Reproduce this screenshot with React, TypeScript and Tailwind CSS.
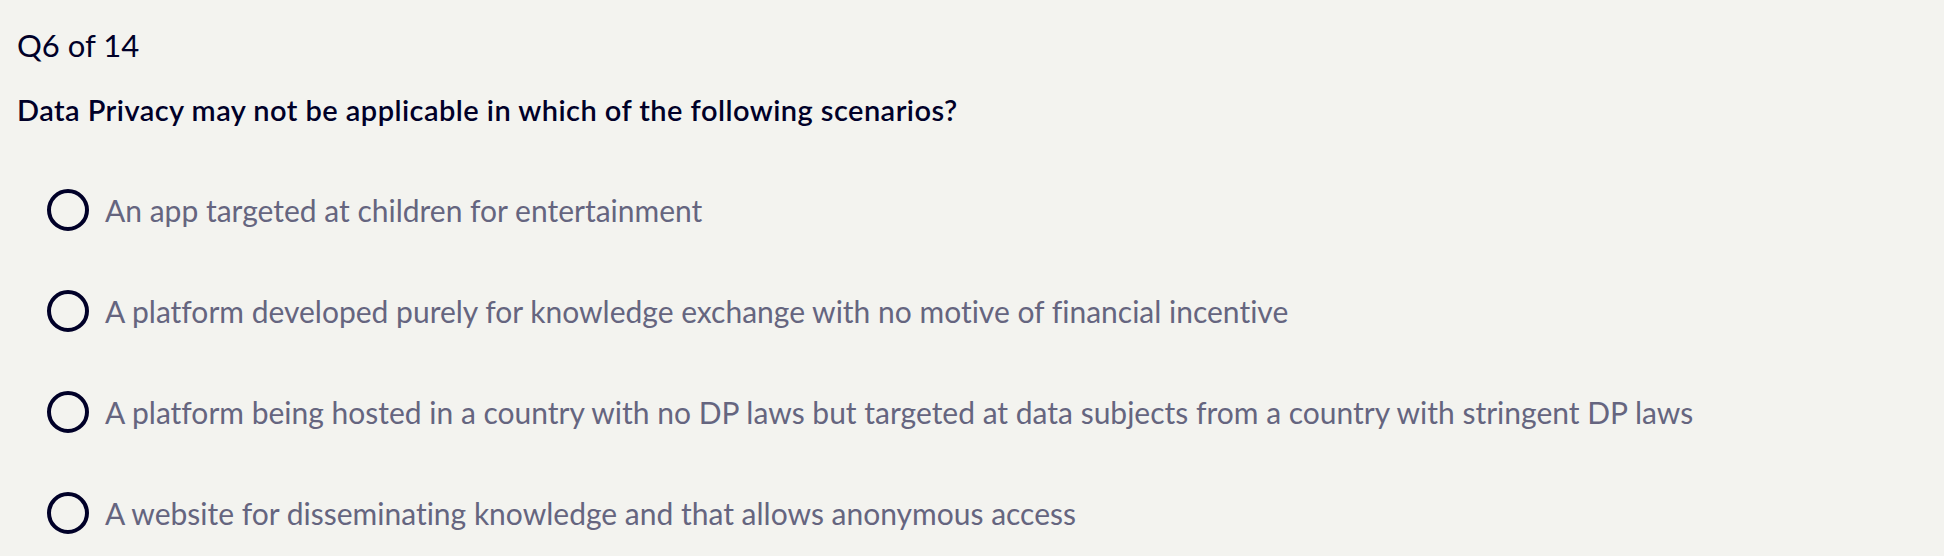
import React from "react";

const options = [
  "An app targeted at children for entertainment",
  "A platform developed purely for knowledge exchange with no motive of financial incentive",
  "A platform being hosted in a country with no DP laws but targeted at data subjects from a country with stringent DP laws",
  "A website for disseminating knowledge and that allows anonymous access",
];

export default function App() {
  return (
    <div className="w-[1944px] h-[556px] bg-[#f3f3ef] overflow-hidden font-['Lato',sans-serif] text-[#000028] [font-variant-ligatures:none]">
      <div className="pl-[17px] pt-[27px]">
        <div className="text-[31px] leading-[36px]">Q6 of 14</div>
        <div className="mt-[30px] text-[29px] leading-[34px] font-semibold tracking-[0.45px]">
          Data Privacy may not be applicable in which of the following scenarios?
        </div>
      </div>
      <div className="pl-[47px] mt-[62px] flex flex-col gap-[59px]">
        {options.map((o) => (
          <label key={o} className="flex items-center gap-[16px] h-[42px]">
            <span className="w-[42px] h-[42px] rounded-full border-[4px] border-[#000028] shrink-0" />
            <span className="text-[30px] leading-[36px] text-[#65657f]">{o}</span>
          </label>
        ))}
      </div>
    </div>
  );
}
